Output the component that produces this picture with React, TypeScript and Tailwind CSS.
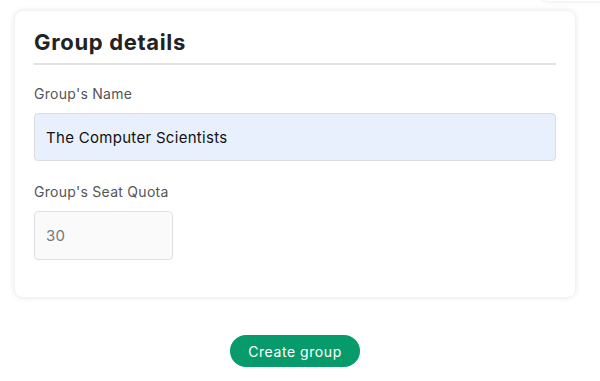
export default function App() {
  return (
    <div className="relative min-h-[381px] w-[600px] overflow-hidden bg-white" style={{ fontFamily: 'Inter, "Noto Sans", sans-serif' }}>
      {/* faint edge of an element above the viewport */}
      <div className="absolute -top-[40px] right-[-20px] h-[41px] w-[80px] rounded-lg bg-white shadow-[0_1px_4px_rgba(0,0,0,0.08)]" />

      <div className="pl-[15px] pr-[25px] pt-[11px]">
        <div className="rounded-lg bg-white px-[19px] pb-[37px] pt-[17px] shadow-[0_0_6px_rgba(0,0,0,0.12)]">
          <h2 className="border-b-2 border-[#e2e2e2] pb-[7px] text-[22px] font-bold leading-[28px] tracking-[0.03em] text-[#222]">
            Group details
          </h2>

          <label className="mt-[19px] block text-[14px] leading-[20px] tracking-[0.02em] text-[#555]">Group's Name</label>
          <input
            type="text"
            defaultValue="The Computer Scientists"
            className="mt-[9px] block h-[48px] w-full rounded-sm border border-[#dcdcdc] bg-[#e8f0fe] px-[11px] text-[15px] tracking-[0.02em] text-[#111] outline-none"
          />

          <label className="mt-[21px] block text-[14px] leading-[20px] tracking-[0.02em] text-[#555]">Group's Seat Quota</label>
          <input
            type="text"
            defaultValue="30"
            className="mt-[9px] block h-[49px] w-[139px] rounded-sm border border-[#e0e0e0] bg-[#fafafa] px-[11px] text-[15px] tracking-[0.02em] text-[#777] outline-none"
          />
        </div>
      </div>

      <div className="mt-[38px] flex justify-center pl-[15px] pr-[25px]">
        <button className="h-[32px] rounded-full bg-[#079b6b] px-[18px] text-[14px] tracking-[0.04em] text-white">
          Create group
        </button>
      </div>
    </div>
  );
}
